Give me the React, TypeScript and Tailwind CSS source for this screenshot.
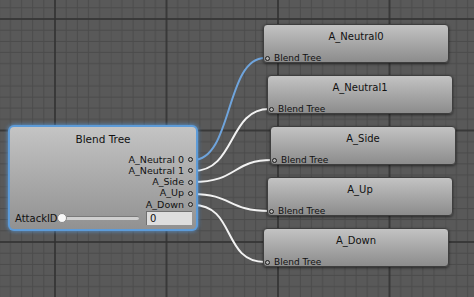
import React from 'react';

const font = { fontFamily: '"DejaVu Sans", "Liberation Sans", sans-serif' };

const children = [
  { name: 'A_Neutral0', pos: 'left-[263px] top-[24px]' },
  { name: 'A_Neutral1', pos: 'left-[267px] top-[75px]' },
  { name: 'A_Side', pos: 'left-[270px] top-[126px]' },
  { name: 'A_Up', pos: 'left-[267px] top-[177px]' },
  { name: 'A_Down', pos: 'left-[263px] top-[228px]' },
];

const outputs = ['A_Neutral 0', 'A_Neutral 1', 'A_Side', 'A_Up', 'A_Down'];

// wires from the blend tree outputs to each child's input port
const wires = [
  { d: 'M193,160 C233,160 225,58 265,58', color: '#6fa4dc' },
  { d: 'M193,171 C236,171 228,109 269,109', color: '#f2f2f2' },
  { d: 'M193,182 C238,182 232,160 272,160', color: '#f2f2f2' },
  { d: 'M193,194 C232,194 228,211 269,211', color: '#f2f2f2' },
  { d: 'M193,205 C236,205 222,262 265,262', color: '#f2f2f2' },
];

const STEP = 11.15;
const MID = 55.75;

const Grid: React.FC = () => {
  const minors = Array.from({ length: 10 }, (_, i) => MID - 5 * STEP + i * STEP);
  return (
    <svg className="absolute inset-0" width="474" height="297">
      <defs>
        <pattern id="grid" width="111.5" height="111.5" patternUnits="userSpaceOnUse" x="-0.75" y="-36.75">
          {minors.map((p) => (
            <g key={p}>
              <line x1={p} y1="0" x2={p} y2="111.5" stroke="#4b4b4b" strokeWidth="1" />
              <line x1="0" y1={p} x2="111.5" y2={p} stroke="#4b4b4b" strokeWidth="1" />
            </g>
          ))}
          <line x1={MID} y1="0" x2={MID} y2="111.5" stroke="#303030" strokeWidth="1.5" />
          <line x1="0" y1={MID} x2="111.5" y2={MID} stroke="#303030" strokeWidth="1.5" />
        </pattern>
      </defs>
      <rect width="474" height="297" fill="url(#grid)" />
      {wires.map((w) => (
        <path key={w.d} d={w.d} fill="none" stroke={w.color} strokeWidth="2" />
      ))}
    </svg>
  );
};

const Port: React.FC = () => (
  <span className="w-[5px] h-[5px] rounded-full border border-[#1e1e1e] bg-[#b0b0b0] shrink-0" />
);

const ChildNode: React.FC<{ name: string; pos: string }> = ({ name, pos }) => (
  <div
    className={`absolute ${pos} w-[186px] h-[39px] rounded-[4px] border border-[#3e3e3e] bg-linear-to-b from-[#c3c3c3] to-[#8c8c8c] shadow-[0_1px_3px_rgba(0,0,0,0.55)] flex flex-col`}
  >
    <div className="pt-[6px] text-center text-[10px] leading-[12px] text-[#111]">{name}</div>
    <div className="mt-auto -mb-[2px] flex items-center gap-[4px] pl-[1px] h-[11px] text-[9px] text-[#111]">
      <Port />
      <span>Blend Tree</span>
    </div>
  </div>
);

const BlendTreeNode: React.FC = () => (
  <div className="absolute left-[8px] top-[125px] w-[190px] h-[106px] p-[2px] rounded-[6px] bg-[#5d9bd8] shadow-[0_0_4px_rgba(90,160,230,0.9)]">
    <div className="w-full h-full rounded-[4px] bg-linear-to-b from-[#c4c4c4] to-[#919191] flex flex-col">
      <div className="pt-[6px] text-center text-[10.5px] leading-[13px] text-[#111]">Blend Tree</div>
      <div className="mt-[8px] flex flex-col">
        {outputs.map((o) => (
          <div key={o} className="h-[11.25px] flex items-center justify-end gap-[4px] pr-[3px] text-[9.5px] text-[#111]">
            <span>{o}</span>
            <Port />
          </div>
        ))}
      </div>
      <div className="mt-[1px] h-[14px] flex items-center pl-[5px] pr-[4px]">
        <span className="w-[44px] text-[10px] text-[#111]">AttackID</span>
        <div className="relative h-[14px] w-[80px]">
          <div className="absolute left-0 right-0 top-[5px] h-[4px] rounded-[2px] bg-[#cfcfcf] border-t border-[#7a7a7a]" />
          <div className="absolute left-[-2px] top-[2px] w-[10px] h-[10px] rounded-full bg-[#f8f8f8] border border-[#8a8a8a]" />
        </div>
        <div className="ml-auto w-[46px] h-[14px] bg-[#dedede] border-t border-l border-[#707070] pl-[3px] text-[10px] leading-[13px] text-[#111]">
          0
        </div>
      </div>
    </div>
  </div>
);

const App: React.FC = () => (
  <div className="relative w-[474px] h-[297px] overflow-hidden bg-[#595959]" style={font}>
    <Grid />
    {children.map((c) => (
      <ChildNode key={c.name} name={c.name} pos={c.pos} />
    ))}
    <BlendTreeNode />
  </div>
);

export default App;
